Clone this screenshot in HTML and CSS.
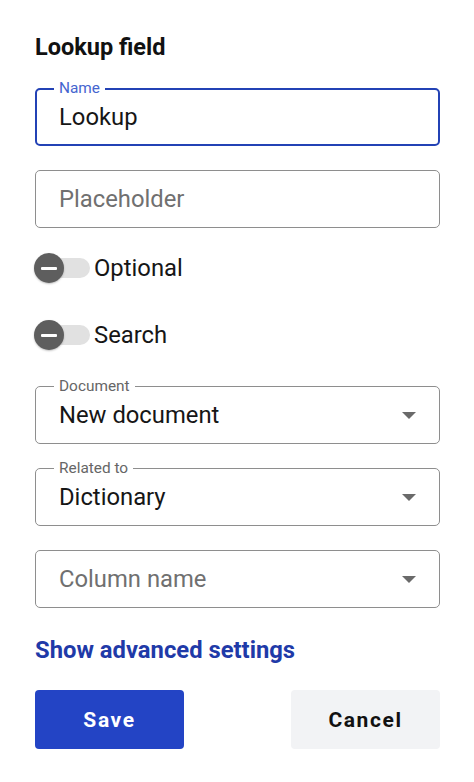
FILE: index.html
```html
<!DOCTYPE html>
<html lang="en">
<head>
<meta charset="utf-8">
<title>Lookup field</title>
<link rel="stylesheet" href="styles.css">
</head>
<body>
<form class="panel">
  <h1 class="title">Lookup field</h1>

  <div class="field field--focused gap-title">
    <span class="field__label">Name</span>
    <span class="field__value">Lookup</span>
  </div>

  <div class="field gap-field">
    <span class="field__value field__value--placeholder">Placeholder</span>
  </div>

  <label class="toggle gap-toggle1">
    <span class="toggle__switch"><span class="toggle__track"></span><span class="toggle__thumb"></span></span>
    <span class="toggle__text">Optional</span>
  </label>

  <label class="toggle gap-toggle2">
    <span class="toggle__switch"><span class="toggle__track"></span><span class="toggle__thumb"></span></span>
    <span class="toggle__text">Search</span>
  </label>

  <div class="field field--select gap-select">
    <span class="field__label field__label--muted">Document</span>
    <span class="field__value">New document</span>
    <svg class="field__arrow" viewBox="0 0 14 7" width="14" height="7"><path d="M0 0h14L7 7z"/></svg>
  </div>

  <div class="field field--select gap-field">
    <span class="field__label field__label--muted">Related to</span>
    <span class="field__value">Dictionary</span>
    <svg class="field__arrow" viewBox="0 0 14 7" width="14" height="7"><path d="M0 0h14L7 7z"/></svg>
  </div>

  <div class="field field--select gap-field">
    <span class="field__value field__value--placeholder">Column name</span>
    <svg class="field__arrow" viewBox="0 0 14 7" width="14" height="7"><path d="M0 0h14L7 7z"/></svg>
  </div>

  <a class="link gap-link" href="#">Show advanced settings</a>

  <div class="actions">
    <button type="button" class="btn btn--primary">Save</button>
    <button type="button" class="btn btn--secondary">Cancel</button>
  </div>
</form>
</body>
</html>
```

FILE: styles.css
```css
* { box-sizing: border-box; }

html, body {
  margin: 0;
  padding: 0;
  background: #ffffff;
}

body {
  font-family: Roboto, "Noto Sans", Arial, sans-serif;
  color: #141414;
}

.panel {
  display: flex;
  flex-direction: column;
  padding: 34px 34px 0 35px;
  width: 474px;
}

.title {
  margin: 0;
  font-size: 23.5px;
  line-height: 26px;
  font-weight: 700;
  color: #111111;
}

.gap-title { margin-top: 28px; }
.gap-field { margin-top: 24px; }
.gap-toggle1 { margin-top: 25px; }
.gap-toggle2 { margin-top: 37px; }
.gap-select { margin-top: 36px; }
.gap-link { margin-top: 29px; }

.field {
  position: relative;
  display: flex;
  align-items: center;
  height: 58px;
  border: 1px solid #8e8e8e;
  border-radius: 5px;
  padding: 0 23px;
}

.field--focused {
  border: 2px solid #2342b5;
  padding: 0 22px;
}

.field__label {
  position: absolute;
  top: -10px;
  left: 18px;
  padding: 0 5px;
  background: #ffffff;
  font-size: 15.4px;
  line-height: 18px;
  color: #4565cf;
}

.field--focused .field__label { top: -11px; left: 17px; }

.field__label--muted { color: #666666; }

.field__value {
  flex: 1;
  font-size: 23.8px;
  line-height: 28px;
  color: #161616;
}

.field__value--placeholder { color: #707070; }

.field__arrow {
  fill: #6a6a6a;
  flex: none;
  margin-top: 1px;
}

.toggle {
  display: flex;
  align-items: center;
  height: 30px;
  gap: 7px;
}

.toggle__switch {
  position: relative;
  width: 53px;
  height: 30px;
  flex: none;
  margin-left: -1px;
}

.toggle__track {
  position: absolute;
  left: 6px;
  top: 5px;
  width: 50px;
  height: 20px;
  border-radius: 10px;
  background: #e1e1e1;
}

.toggle__thumb {
  position: absolute;
  left: 0;
  top: 0;
  width: 30px;
  height: 30px;
  border-radius: 50%;
  background: #5e5e5e;
  box-shadow: 0 1px 2px rgba(0,0,0,0.25);
}

.toggle__thumb::after {
  content: "";
  position: absolute;
  left: 7px;
  right: 7px;
  top: 13.5px;
  height: 3px;
  background: #ffffff;
  border-radius: 1px;
}

.toggle__text {
  font-size: 23.8px;
  line-height: 28px;
  color: #161616;
}

.link {
  font-size: 23.8px;
  line-height: 26px;
  font-weight: 700;
  color: #1f3aa8;
  text-decoration: none;
}

.actions {
  display: flex;
  justify-content: space-between;
  margin-top: 27px;
}

.btn {
  width: 149px;
  height: 59px;
  border: none;
  border-radius: 4px;
  font-family: Roboto, "Noto Sans", Arial, sans-serif;
  font-size: 21px;
  font-weight: 700;
  letter-spacing: 1.6px;
  cursor: pointer;
}

.btn--primary {
  background: #2344c5;
  color: #ffffff;
}

.btn--secondary {
  background: #f2f3f5;
  color: #111111;
}
```
